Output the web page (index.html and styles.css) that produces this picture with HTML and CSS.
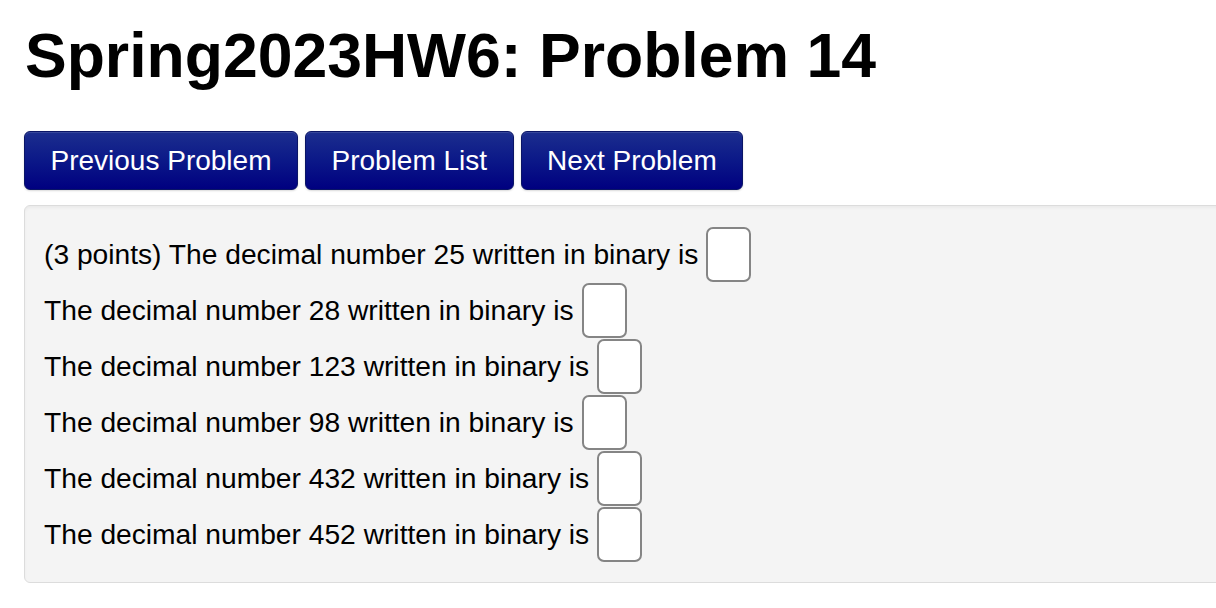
FILE: index.html
```html
<!DOCTYPE html>
<html lang="en">
<head>
<meta charset="utf-8">
<title>Spring2023HW6: Problem 14</title>
<link rel="stylesheet" href="styles.css">
</head>
<body>
<div class="page">
  <h1 class="title">Spring2023HW6: Problem 14</h1>
  <nav class="nav">
    <a class="btn" href="#">Previous Problem</a>
    <a class="btn" href="#">Problem List</a>
    <a class="btn" href="#">Next Problem</a>
  </nav>
  <div class="problem">
    <div class="row"><span>(3 points) The decimal number 25 written in binary is</span><input class="answer" type="text"></div>
    <div class="row"><span>The decimal number 28 written in binary is</span><input class="answer" type="text"></div>
    <div class="row"><span>The decimal number 123 written in binary is</span><input class="answer" type="text"></div>
    <div class="row"><span>The decimal number 98 written in binary is</span><input class="answer" type="text"></div>
    <div class="row"><span>The decimal number 432 written in binary is</span><input class="answer" type="text"></div>
    <div class="row"><span>The decimal number 452 written in binary is</span><input class="answer" type="text"></div>
  </div>
</div>
</body>
</html>
```

FILE: styles.css
```css
html, body {
  margin: 0;
  padding: 0;
  overflow: hidden;
  background: #ffffff;
}

body {
  font-family: "Liberation Sans", Arial, Helvetica, sans-serif;
  color: #000;
}

.page {
  padding: 21px 0 0 24px;
}

.title {
  margin: 0 0 42px 1px;
  font-size: 62.5px;
  line-height: 68px;
  font-weight: bold;
  letter-spacing: 0;
}

.nav {
  display: flex;
  gap: 7px;
  margin-bottom: 15px;
}

.btn {
  display: flex;
  align-items: center;
  justify-content: center;
  height: 59px;
  box-sizing: border-box;
  padding: 0 25.5px;
  font-size: 28px;
  color: #fff;
  text-decoration: none;
  background: linear-gradient(to bottom, #1c2e8e 0%, #0b1888 50%, #000080 100%);
  border: 1px solid #0a1566;
  border-radius: 6px;
  box-shadow: 0 1px 2px rgba(0, 0, 0, 0.15), inset 0 1px 0 rgba(255, 255, 255, 0.12);
}

.problem {
  width: 1240px;
  box-sizing: border-box;
  padding: 20px 19px 19px 19px;
  background: #f4f4f4;
  border: 1px solid #dcdcdc;
  border-radius: 6px;
  box-shadow: inset 0 2px 3px rgba(0, 0, 0, 0.04);
}

.row {
  display: flex;
  align-items: center;
  gap: 8px;
  height: 56px;
  font-size: 28.2px;
}

.row + .row {
  margin-top: 0.2px;
}

.answer {
  width: 45px;
  height: 55px;
  box-sizing: border-box;
  margin: 0;
  padding: 0;
  background: #fff;
  border: 2px solid #858585;
  border-radius: 7px;
  font-size: 28px;
  outline: none;
}
```
